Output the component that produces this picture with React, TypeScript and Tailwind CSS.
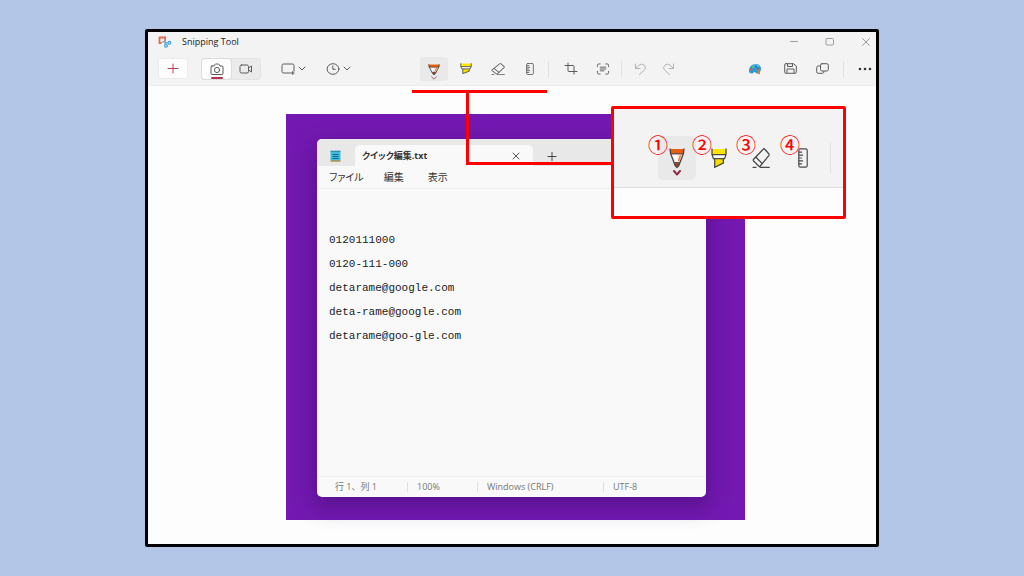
import type { ReactNode } from 'react'

const NOTE = `0120111000
0120-111-000
detarame@google.com
deta-rame@google.com
detarame@goo-gle.com`

type IconProps = { className?: string }

function Line({ className = '', box = '0 0 16 16', width = 1, children }: IconProps & { box?: string; width?: number; children: ReactNode }) {
  return (
    <svg className={className} viewBox={box} fill="none" stroke="currentColor" strokeWidth={width}
         strokeLinecap="round" strokeLinejoin="round" aria-hidden="true">
      {children}
    </svg>
  )
}

function ChevronIcon({ className = '' }: IconProps) {
  return <Line className={className} box="0 0 8 5"><path d="M1 1l3 3 3-3" /></Line>
}

function PenIcon({ className = '' }: IconProps) {
  return (
    <svg className={className} viewBox="0 0 16 20" preserveAspectRatio="none" aria-hidden="true">
      <path d="M2.5 6h11L9.8 15H6.2z" fill="#fbe9df" />
      <path d="M4 6h5L7.6 14.5H6.5z" fill="#fff" />
      <path d="M11.6 7L9.6 13" stroke="#f0813c" strokeWidth="1.6" />
      <path d="M1 1h14v4.5H1z" fill="#ea5b0c" />
      <path d="M1 .5L1.6 5.7 6.2 17.6 8 19.4l1.8-1.8L14.4 5.7 15 .5" fill="none" stroke="#444" strokeWidth="1.3" />
      <path d="M1.4 5.8h13.2" stroke="#5a3a2a" strokeWidth="1.2" />
      <path d="M6 14.5h4l-.8 3.5L8 19.2 6.8 18z" fill="#b3420c" stroke="#444" strokeWidth=".8" />
    </svg>
  )
}

function MarkerIcon({ className = '' }: IconProps) {
  return (
    <svg className={className} viewBox="0 0 16 20" preserveAspectRatio="none" aria-hidden="true">
      <path d="M1 1h14v5.5H1z" fill="#ffe500" />
      <path d="M2 6.5h12v4H2z" fill="#fff" />
      <path d="M4 11h8.3v4L4 19z" fill="#f7dc00" />
      <path d="M1 .5v6l1.4 4.2h11.2L15 6.5v-6M1.2 6.6h13.6M3.7 11v8.3l8.6-4.3v-4" fill="none" stroke="#4a4a44" strokeWidth="1.3" />
    </svg>
  )
}

function EraserIcon({ className = '' }: IconProps) {
  return (
    <svg className={className} viewBox="0 0 18 20" preserveAspectRatio="none" fill="none" stroke="currentColor"
         strokeWidth="1.3" strokeLinecap="round" strokeLinejoin="round" aria-hidden="true">
      <path d="M11.2 1.2q.8-.9 1.6 0l4 4.6q.7.9 0 1.8L8.3 18q-.8.9-1.6 0L1.6 13q-.7-.9 0-1.8z" />
      <path d="M4 9.2l6 6.2M1 19.3h3M8 19.3h9.3" />
    </svg>
  )
}

function RulerIcon({ className = '' }: IconProps) {
  return (
    <svg className={className} viewBox="0 0 10 20" preserveAspectRatio="none" fill="none" stroke="currentColor"
         strokeWidth="1.2" strokeLinecap="round" aria-hidden="true">
      <rect x=".8" y=".8" width="8.4" height="18.4" rx="1.6" />
      <path d="M1 4.2h2.6M1 7.2h3.6M1 10h2.6M1 12.8h3.6M1 15.8h2.6" />
    </svg>
  )
}

function ScissorsLogo() {
  return (
    <svg className="h-3 w-[14px]" viewBox="0 0 14 12" fill="none" aria-hidden="true">
      <path d="M3.6 7H1.5V1.5h5.6V5" stroke="#df6a50" strokeWidth="1.8" />
      <path d="M4.2 5.6l5.6 1.200M7.100 4.500v4" stroke="#7a9ab0" strokeWidth="1.2" />
      <circle cx="11.4" cy="6.8" r="1.4" stroke="#3aa7e0" strokeWidth="1.2" />
      <circle cx="8" cy="9.800" r="1.4" stroke="#3aa7e0" strokeWidth="1.2" />
    </svg>
  )
}

function PaintLogo() {
  return (
    <svg className="h-3 w-[14px]" viewBox="0 0 14 12" aria-hidden="true">
      <path d="M1 8.5C.8 3.8 4 1 7.6 1c3.3 0 5.4 2 5.4 4.8 0 2.4-1.6 4.7-4 4.7-1.6 0-1.2-1.5-2.4-1.5-1 0-1.2 1.4-2.6 1.4C2.2 10.4 1.1 9.9 1 8.5z" fill="#2b9be0" />
      <path d="M5 2.2C6.5 1 10 .6 12 3L9 4z" fill="#55c4f2" />
      <circle cx="3.3" cy="6.6" r="1.2" fill="#e0592d" />
      <circle cx="5" cy="3.9" r="1.2" fill="#6cc05a" />
      <circle cx="8" cy="3.2" r=".9" fill="#1762b8" />
      <path d="M9.3 6l1.5-.7 1.4 4.8-1 1.5-1.2-.8z" fill="#c4823a" />
      <path d="M8.4 4.6l1.6-.6 1 1.7-1.5.8z" fill="#5b6b78" />
    </svg>
  )
}

function NotepadLogo() {
  return (
    <svg className="h-3 w-[11px]" viewBox="0 0 11 12" aria-hidden="true">
      <rect x=".5" y="1" width="10" height="10" rx="1" fill="#3dbcdc" />
      <path d="M.5 1.2h10" stroke="#2b7d9e" />
      <path d="M2.5 4.500h6M2.5 6.500h6M2.5 8.500h6" stroke="#0f5d80" strokeWidth=".9" />
      <path d="M.5 11.2h10" stroke="#c98a3c" strokeWidth="1.3" />
    </svg>
  )
}

const Divider = ({ className = 'h-4' }: IconProps) => <div className={`w-px bg-[#e0e0e0] ${className}`} />

function ToolButton({ label, className = 'w-7', children }: { label: string; className?: string; children: ReactNode }) {
  return (
    <button type="button" aria-label={label} className={`flex h-6 items-center justify-center text-[#5c5c5c] ${className}`}>
      {children}
    </button>
  )
}

function WindowControls({ className = '' }: IconProps) {
  return (
    <div className={`flex items-center gap-6 ${className}`}>
      <button type="button" aria-label="Minimize"><Line className="size-3" box="0 0 12 12"><path d="M2.5 5.5h7" /></Line></button>
      <button type="button" aria-label="Maximize"><Line className="size-3" box="0 0 12 12"><rect x="2" y="2.5" width="7.5" height="6.5" rx="1" /></Line></button>
      <button type="button" aria-label="Close"><Line className="size-3" box="0 0 12 12"><path d="M2.5 2.5l7 7M9.5 2.5l-7 7" /></Line></button>
    </div>
  )
}

function TitleBar() {
  return (
    <div className="flex h-5 items-center justify-between pl-[10px] pr-1">
      <div className="flex items-center gap-[10px]">
        <ScissorsLogo />
        <h1 className="text-[9px] text-[#222]">Snipping Tool</h1>
      </div>
      <WindowControls className="text-[#9c9c9c]" />
    </div>
  )
}

function Toolbar() {
  return (
    <div className="flex h-[33px] items-center justify-between">
      <div className="flex items-center gap-5 pl-[10px] pr-2">
        <div className="flex items-center gap-[13px]">
          <button type="button" aria-label="New" className="flex h-[21px] w-[30px] items-center justify-center rounded-[3px] border border-[#ececec] bg-[#fdfdfd] text-[#b8405c]">
            <Line className="size-3" box="0 0 12 12"><path d="M1 5.5h10M6 1v9" /></Line>
          </button>
          <div className="flex h-[22px] rounded-[3px] border border-[#e4e4e4] bg-[#ebebeb]">
            <button type="button" aria-label="Snip" className="flex w-[29px] flex-col items-center justify-between rounded-[3px] bg-[#fdfdfd] pt-1 text-[#5c5c5c] shadow-[0_0_0_1px_#dcdcdc]">
              <Line className="h-[13px] w-[14px]" box="0 0 14 13">
                <path d="M2 3h2l1-1.5q.3-.5.9-.5h2.2q.6 0 .9.5L10 3h2q1 0 1 1v6.5q0 1-1 1H2q-1 0-1-1V4q0-1 1-1z" />
                <circle cx="7" cy="7" r="2.6" />
              </Line>
              <span className="h-[2px] w-3 rounded-full bg-[#b8304e]" />
            </button>
            <button type="button" aria-label="Record" className="flex w-[29px] items-center justify-center text-[#5c5c5c]">
              <Line className="h-[10px] w-[14px]" box="0 0 14 10">
                <rect x="1" y="1" width="8.5" height="8" rx="1.5" />
                <path d="M9.5 4l3-2v6l-3-2" />
              </Line>
            </button>
          </div>
        </div>
        <button type="button" aria-label="Snipping mode" className="flex items-center gap-[3px] text-[#5c5c5c]">
          <Line className="h-3 w-[14px]" box="0 0 14 12">
            <path d="M9.5 10H2.5Q1 10 1 8.500v-6Q1 1 2.5 1h9Q13 1 13 2.500V8M11.700 8.500v3M10.200 10h3" />
          </Line>
          <ChevronIcon className="h-[5px] w-2" />
        </button>
        <button type="button" aria-label="Delay" className="flex items-center gap-[3px] text-[#5c5c5c]">
          <Line className="h-3 w-[14px]" box="0 0 14 12">
            <ellipse cx="7" cy="6" rx="5.9" ry="5.3" />
            <path d="M6.8 3v3.300H9.3" />
          </Line>
          <ChevronIcon className="h-[5px] w-2" />
        </button>
      </div>

      <div className="flex items-center gap-1">
        <button type="button" aria-label="Pen" className="flex h-6 w-7 flex-col items-center gap-px rounded-[3px] bg-[#e9e9e9] pt-[7px] text-[#a83a55]">
          <PenIcon className="h-[11px] w-3" />
          <ChevronIcon className="h-1 w-2" />
        </button>
        <ToolButton label="Highlighter"><MarkerIcon className="h-[11px] w-3" /></ToolButton>
        <ToolButton label="Eraser"><EraserIcon className="h-3 w-[14px]" /></ToolButton>
        <ToolButton label="Ruler"><RulerIcon className="h-3 w-2" /></ToolButton>
        <Divider className="mr-1 h-4" />
        <ToolButton label="Crop">
          <Line className="h-[13px] w-[14px]" box="0 0 14 13"><path d="M4 1v7.5q0 1 1 1h8M1 3.5h8q1 0 1 1V12" /></Line>
        </ToolButton>
        <ToolButton label="Text actions">
          <Line className="h-3 w-[14px]" box="0 0 14 13">
            <path d="M1 4V2.5Q1 1 2.5 1H4M10 1h1.5Q13 1 13 2.5V4M13 9v1.5q0 1.5-1.5 1.5H10M4 12H2.5Q1 12 1 10.5V9M4 4.5h6M4 6.5h6M4 8.5h4" />
          </Line>
        </ToolButton>
        <Divider />
        <div className="flex gap-1 pl-[3px]">
          <button type="button" aria-label="Undo" disabled className="flex h-6 w-6 items-center justify-center text-[#b4b4b4]">
            <Line className="h-3 w-[13px]" box="0 0 13 12"><path d="M1.5 1v4.5H6M1.7 5.3L5 2.2Q7.5 0 10 2t.8 4.7L5.5 11.5" /></Line>
          </button>
          <button type="button" aria-label="Redo" disabled className="flex h-6 w-6 items-center justify-center text-[#b4b4b4]">
            <Line className="h-3 w-[13px]" box="0 0 13 12"><path d="M11.5 1v4.5H7M11.3 5.3L8 2.2Q5.5 0 3 2t-.8 4.7L7.5 11.5" /></Line>
          </button>
        </div>
      </div>

      <div className="flex items-center gap-[10px]">
        <ToolButton label="Edit in Paint"><PaintLogo /></ToolButton>
        <ToolButton label="Save" className="w-[22px]">
          <Line className="h-[11px] w-[13px]" box="0 0 13 11">
            <path d="M2 .7h7.5L12.3 3v6.3q0 1-1 1H1.7q-1 0-1-1V1.7q0-1 1-1zM3.5 1v2.5h5V1M3 10V6h7v4" />
          </Line>
        </ToolButton>
        <ToolButton label="Copy" className="w-[22px]">
          <Line className="h-[11px] w-[13px]" box="0 0 13 11">
            <rect x="4.5" y=".7" width="7.8" height="7.3" rx="1.5" />
            <path d="M4.3 3H2.2Q.7 3 .7 4.5v4.3q0 1.5 1.5 1.5h4.3Q8 10.3 8 8.5" />
          </Line>
        </ToolButton>
        <Divider />
        <button type="button" aria-label="See more" className="flex h-6 w-[22px] items-center justify-center">
          <svg className="h-1 w-[14px]" viewBox="0 0 14 4" fill="#333" aria-hidden="true">
            <circle cx="2" cy="2" r="1.3" /><circle cx="7" cy="2" r="1.3" /><circle cx="12" cy="2" r="1.3" />
          </svg>
        </button>
      </div>
    </div>
  )
}

function Notepad() {
  return (
    <section className="flex flex-1 flex-col overflow-hidden rounded-[5px] bg-[#f9f9f9] shadow-[0_8px_20px_4px_rgba(50,10,90,0.35)]">
      <div className="flex h-[27px] items-end bg-[#e8e8e8] pl-[13px]">
        <div className="flex h-[21px] items-center pr-[14px]"><NotepadLogo /></div>
        <div className="flex h-[21px] w-[178px] items-center justify-between rounded-t-[5px] bg-[#f9f9f9] pl-[7px] pr-3">
          <span className="text-[9px] font-bold text-[#333] [font-feature-settings:'palt']">クイック編集.txt</span>
          <button type="button" aria-label="Close tab" className="text-[#555]">
            <Line className="size-[10px]" box="0 0 10 10"><path d="M2 2l6 6M8 2l-6 6" /></Line>
          </button>
        </div>
        <button type="button" aria-label="New tab" className="ml-[14px] flex h-[21px] items-center text-[#444]">
          <Line className="size-[10px]" box="0 0 10 10"><path d="M1 5.5h8M5 1.5v8" /></Line>
        </button>
        <WindowControls className="mb-[10px] ml-auto pr-3 text-[#777]" />
      </div>
      <nav className="flex h-[23px] items-center gap-5 border-b border-[#efefef] pl-3 text-[10px] text-[#333] [font-feature-settings:'palt']">
        <button type="button">ファイル</button>
        <button type="button" className="min-w-6 text-left">編集</button>
        <button type="button">表示</button>
      </nav>
      <textarea
        aria-label="クイック編集.txt"
        spellCheck={false}
        defaultValue={NOTE}
        className="w-full flex-1 resize-none bg-transparent px-3 pt-[39px] font-['Liberation_Mono',monospace] text-[11px] leading-[24px] text-[#222] outline-none"
      />
      <footer className="flex h-[21px] items-center border-t border-[#efefef] pl-[18px] text-[9px] text-[#777]">
        <span className="w-[72px]">行 1、列 1</span>
        <Divider className="h-[10px]" />
        <span className="w-[69px] pl-[9px]">100%</span>
        <Divider className="h-[10px]" />
        <span className="w-[125px] pl-[9px]">Windows (CRLF)</span>
        <Divider className="h-[10px]" />
        <span className="pl-[9px]">UTF-8</span>
      </footer>
    </section>
  )
}

// Enlarged view of the four drawing tools, with numbers
function Callout() {
  return (
    <aside className="absolute right-[30px] top-[74px] h-[113px] w-[235px] rounded-[2px] border-[3px] border-[#ff0000] bg-[#fdfdfd]">
      <div className="flex h-[79px] items-start gap-1 border-b border-[#dedede] bg-[#f3f3f3] pl-11 pt-[27px] text-[#4a4a4a]">
        <div className="flex h-11 w-[38px] flex-col items-center gap-[2px] rounded-[5px] bg-[#e9e9e9] pt-3 text-[#8f2f48]">
          <PenIcon className="h-5 w-4" />
          <Line className="h-[6px] w-[10px]" box="0 0 10 6" width={2}><path d="M2 1l3 3.5L8 1" /></Line>
        </div>
        <div className="flex w-[38px] justify-center pt-3"><MarkerIcon className="h-5 w-4" /></div>
        <div className="flex w-[38px] justify-center pt-3"><EraserIcon className="h-5 w-[18px]" /></div>
        <div className="flex w-[38px] justify-center pt-3"><RulerIcon className="h-5 w-[10px]" /></div>
        <Divider className="ml-1 mt-[7px] h-[30px]" />
      </div>
      <ol className="absolute left-[34px] top-[26px] flex gap-6 font-['Noto_Sans_CJK_JP',sans-serif] text-[20px] leading-5 font-medium text-[#ff0000]">
        {['①', '②', '③', '④'].map((n) => (
          <li key={n} className="w-5 text-center">{n}</li>
        ))}
      </ol>
    </aside>
  )
}

export default function App() {
  return (
    <div className="flex min-h-screen bg-[#b4c6e7] px-[145px] py-[29px] font-['Open_Sans','Noto_Sans_CJK_JP',sans-serif]">
      <main className="relative flex flex-1 flex-col rounded-[2px] border-[3px] border-black bg-[#fdfdfd]">
        <header className="border-b border-[#ececec] bg-[#f3f3f3]">
          <TitleBar />
          <Toolbar />
        </header>
        <div className="flex flex-1 pt-7 pr-[131px] pb-6 pl-[138px]">
          <div className="flex flex-1 bg-[#7319b1] pt-[25px] pr-[39px] pb-[23px] pl-[31px]">
            <Notepad />
          </div>
        </div>

        <div className="absolute left-[264px] top-[58px] h-[3px] w-[135px] bg-[#ff0000]" />
        <div className="absolute left-[318px] right-[264px] top-[60px] h-[73px] border-b-[3px] border-l-[3px] border-[#ff0000]" />
        <Callout />
      </main>
    </div>
  )
}
